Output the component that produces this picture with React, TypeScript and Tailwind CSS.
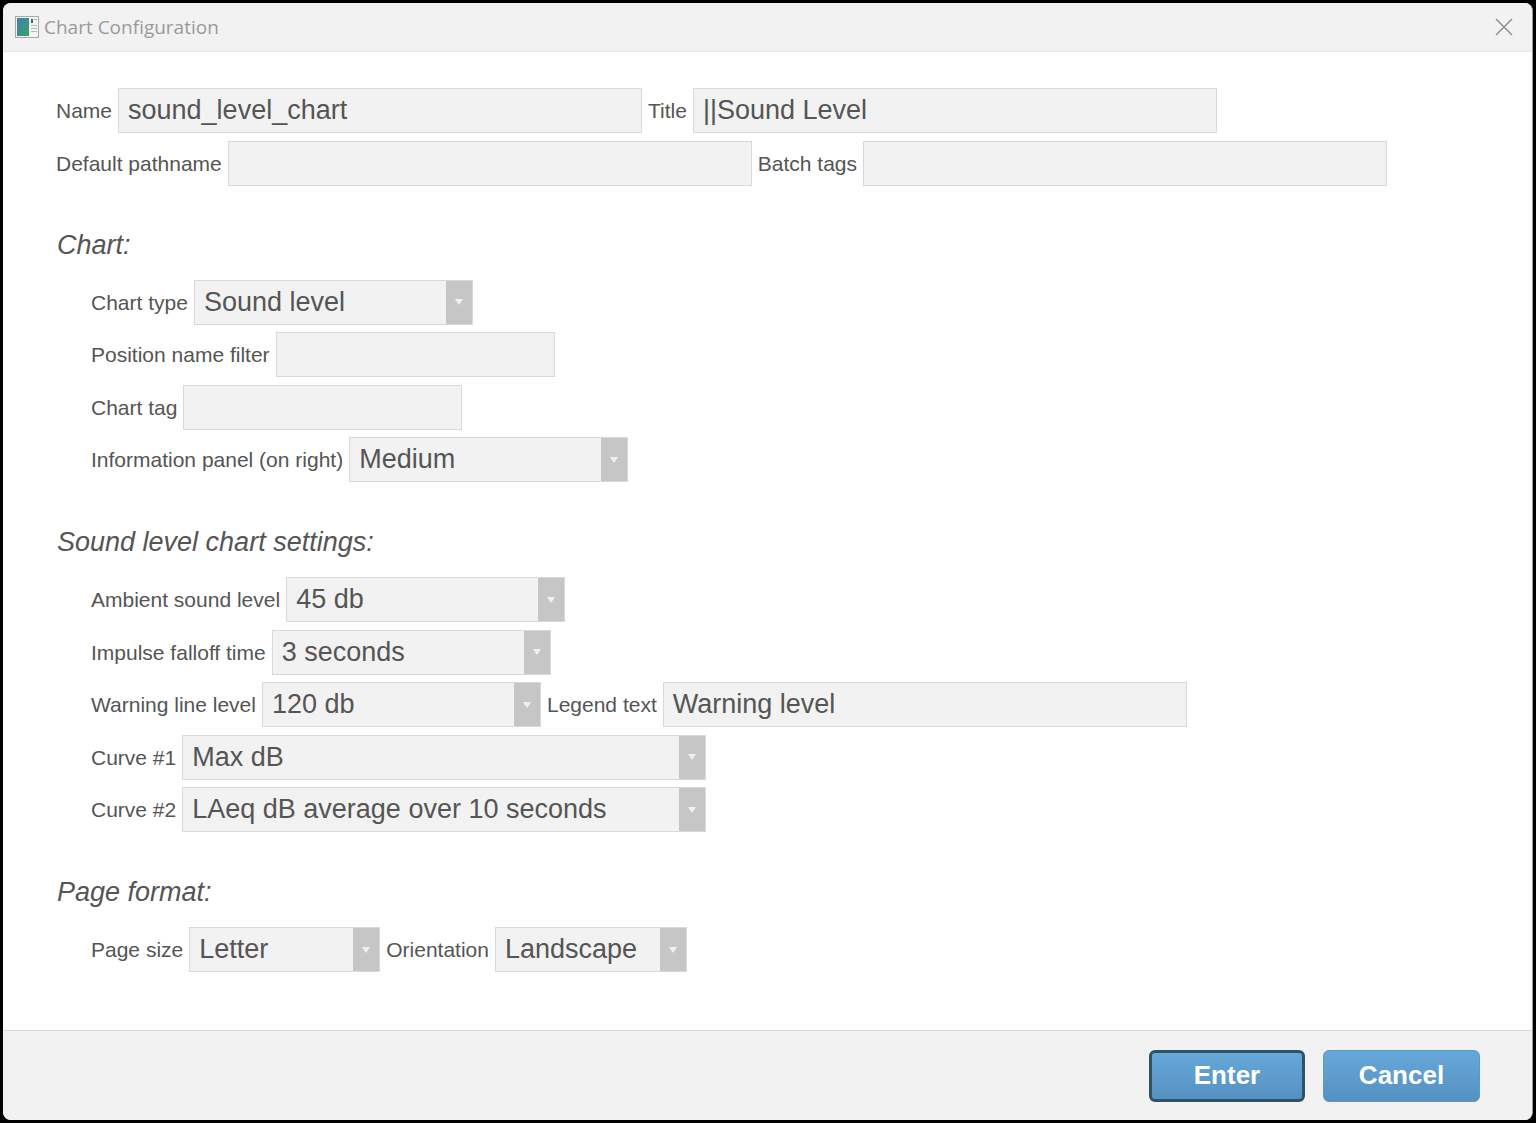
import React from 'react';

const font = "font-['Liberation_Sans',Arial,sans-serif]";

const TextBox: React.FC<{ width: string; value?: string }> = ({ width, value }) => (
  <div
    className={`${width} h-[45px] shrink-0 bg-[#f2f2f2] border border-[#d9d9d9] flex items-center pl-[9px] text-[27px] text-[#555] leading-none`}
  >
    {value}
  </div>
);

const Select: React.FC<{ width: string; value: string }> = ({ width, value }) => (
  <div className={`${width} h-[45px] shrink-0 bg-[#f2f2f2] border border-[#d9d9d9] flex`}>
    <div className="flex-1 flex items-center pl-[9px] text-[27px] text-[#555] leading-none">{value}</div>
    <div className="w-[26px] bg-[#c6c6c6] flex items-center justify-center">
      <svg width="10" height="8" viewBox="0 0 10 8">
        <path d="M1 1h8L5 7z" fill="#f0f0f0" />
      </svg>
    </div>
  </div>
);

const Label: React.FC<{ children: React.ReactNode }> = ({ children }) => (
  <span className="text-[21px] text-[#555] leading-none whitespace-nowrap">{children}</span>
);

const Row: React.FC<{ children: React.ReactNode }> = ({ children }) => (
  <div className="flex items-center gap-[6px]">{children}</div>
);

const Heading: React.FC<{ first?: boolean; children: React.ReactNode }> = ({ first, children }) => (
  <div
    className={`italic text-[27px] leading-[32px] text-[#555] mb-[19px] -ml-[34px] ${first ? 'mt-[43px]' : 'mt-[44px]'}`}
  >
    {children}
  </div>
);

const AppIcon = () => (
  <svg width="24" height="22" viewBox="0 0 24 22">
    <defs>
      <linearGradient id="ic" x1="0" y1="0" x2="1" y2="1">
        <stop offset="0" stopColor="#3f7fb8" />
        <stop offset="1" stopColor="#3aa35e" />
      </linearGradient>
    </defs>
    <rect x="0.5" y="0.5" width="23" height="21" fill="#f4f4f4" stroke="#a8a8a8" />
    <rect x="2" y="2" width="12" height="18" fill="url(#ic)" />
    <rect x="16" y="3" width="2" height="4" fill="#2e7a4a" />
    <rect x="19" y="3" width="3" height="1" fill="#b0b0b0" />
    <rect x="16" y="9" width="6" height="1" fill="#b8b8b8" />
    <rect x="16" y="12" width="6" height="1" fill="#b8b8b8" />
    <rect x="16" y="15" width="6" height="1" fill="#b8b8b8" />
  </svg>
);

export default function App() {
  return (
    <div className={`w-[1536px] h-[1123px] bg-black p-[3px] ${font}`}>
      <div className="h-full bg-white rounded-[8px] overflow-hidden flex flex-col border-r border-[#9a9a9a]">
        {/* title bar */}
        <div className="h-[49px] shrink-0 bg-[#f2f2f2] border-b border-[#e6e6e6] flex items-center pl-[12px] pr-[18px]">
          <AppIcon />
          <span className="ml-[5px] text-[19px] text-[#9a9a9a] font-['Open_Sans',sans-serif]">Chart Configuration</span>
          <div className="flex-1" />
          <svg width="20" height="20" viewBox="0 0 20 20">
            <path d="M2 2L18 18M18 2L2 18" stroke="#8a8a8a" strokeWidth="1.4" />
          </svg>
        </div>

        {/* body */}
        <div className="flex-1 pl-[53px] pt-[36px]">
          <div className="flex flex-col gap-[7.5px]">
            <Row>
              <Label>Name</Label>
              <TextBox width="w-[524px]" value="sound_level_chart" />
              <Label>Title</Label>
              <TextBox width="w-[524px]" value="||Sound Level" />
            </Row>
            <Row>
              <Label>Default pathname</Label>
              <TextBox width="w-[524px]" />
              <Label>Batch tags</Label>
              <TextBox width="w-[524px]" />
            </Row>
          </div>

          <div className="pl-[35px]">
            <Heading first>Chart:</Heading>
            <div className="flex flex-col gap-[7.5px]">
              <Row>
                <Label>Chart type</Label>
                <Select width="w-[279px]" value="Sound level" />
              </Row>
              <Row>
                <Label>Position name filter</Label>
                <TextBox width="w-[279px]" />
              </Row>
              <Row>
                <Label>Chart tag</Label>
                <TextBox width="w-[279px]" />
              </Row>
              <Row>
                <Label>Information panel (on right)</Label>
                <Select width="w-[279px]" value="Medium" />
              </Row>
            </div>

            <Heading>Sound level chart settings:</Heading>
            <div className="flex flex-col gap-[7.5px]">
              <Row>
                <Label>Ambient sound level</Label>
                <Select width="w-[279px]" value="45 db" />
              </Row>
              <Row>
                <Label>Impulse falloff time</Label>
                <Select width="w-[279px]" value="3 seconds" />
              </Row>
              <Row>
                <Label>Warning line level</Label>
                <Select width="w-[279px]" value="120 db" />
                <Label>Legend text</Label>
                <TextBox width="w-[524px]" value="Warning level" />
              </Row>
              <Row>
                <Label>Curve #1</Label>
                <Select width="w-[524px]" value="Max dB" />
              </Row>
              <Row>
                <Label>Curve #2</Label>
                <Select width="w-[524px]" value="LAeq dB average over 10 seconds" />
              </Row>
            </div>

            <Heading>Page format:</Heading>
            <Row>
              <Label>Page size</Label>
              <Select width="w-[191px]" value="Letter" />
              <Label>Orientation</Label>
              <Select width="w-[192px]" value="Landscape" />
            </Row>
          </div>
        </div>

        {/* footer */}
        <div className="h-[90px] shrink-0 bg-[#f2f2f2] border-t border-[#d9d9d9] flex items-center justify-end gap-[18px] pr-[52px]">
          <button className="w-[156px] h-[52px] rounded-[6px] border-[3px] border-[#2f5266] bg-gradient-to-b from-[#66a8da] to-[#5591c1] text-white font-bold text-[26px]">
            Enter
          </button>
          <button className="w-[157px] h-[52px] rounded-[6px] border border-[#5a9acb] bg-gradient-to-b from-[#66a8da] to-[#5591c1] text-white font-bold text-[26px]">
            Cancel
          </button>
        </div>
      </div>
    </div>
  );
}
